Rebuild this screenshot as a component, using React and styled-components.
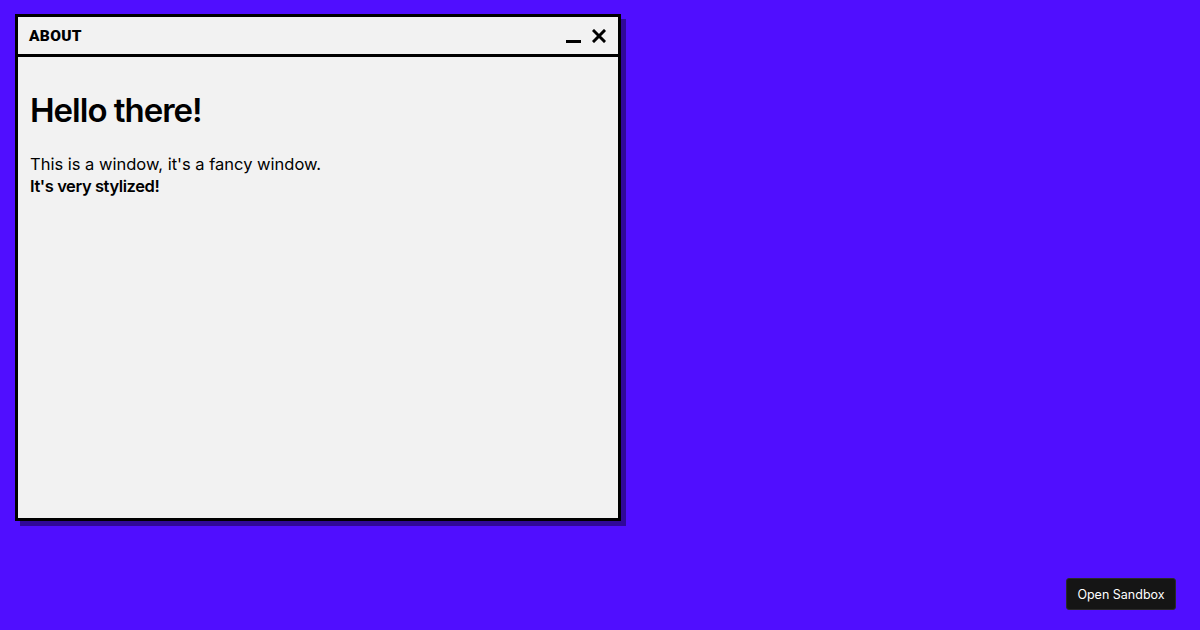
import React from 'react'
import styled, { createGlobalStyle } from 'styled-components'

const GlobalStyle = createGlobalStyle`
    html, body {
        margin: 0;
        padding: 0;
        background: #500eff;
        height: 100%;
    }
    body {
        font-family: 'Inter', 'Liberation Sans', sans-serif;
    }
`

const Page = styled.main`
    min-height: 630px;
    padding: 14px 0 0 15px;
    box-sizing: border-box;
`

const Window = styled.section`
    display: flex;
    flex-direction: column;
    width: 606px;
    height: 507px;
    box-sizing: border-box;
    background: #f2f2f2;
    border: 3px solid #000;
    box-shadow: 5px 5px 0 rgba(0, 0, 0, 0.4);
`

const TitleBar = styled.header`
    display: flex;
    align-items: center;
    justify-content: space-between;
    height: 40px;
    padding: 1px 12px 0 11px;
    box-sizing: border-box;
    border-bottom: 3px solid #000;
    & h2 {
        margin: 0;
        font-family: 'Roboto', 'Inter', sans-serif;
        font-weight: 900;
        font-size: 15.5px;
        letter-spacing: 0.3px;
        color: #000;
    }
`

const Controls = styled.div`
    display: flex;
    align-items: center;
    gap: 11px;
`

const IconButton = styled.button`
    display: flex;
    padding: 0;
    border: none;
    background: none;
    cursor: pointer;
`

const Content = styled.div`
    padding: 33px 12px;
    color: #000;
    & h1 {
        margin: 0 0 23px 0;
        font-family: 'Inter', sans-serif;
        font-weight: 600;
        font-size: 33px;
        letter-spacing: -1px;
        line-height: 40px;
    }
    & p {
        margin: 0;
        font-family: 'Inter', sans-serif;
        font-size: 16.5px;
        line-height: 22px;
        letter-spacing: 0;
        font-weight: 400;
    }
    & strong {
        font-weight: 600;
        letter-spacing: -0.4px;
    }
`

const SandboxButton = styled.a`
    position: fixed;
    right: 24px;
    bottom: 20px;
    display: flex;
    align-items: center;
    justify-content: center;
    width: 110px;
    height: 32px;
    box-sizing: border-box;
    background: #151515;
    border: 1px solid #2a2a2a;
    border-radius: 3px;
    color: #fff;
    font-family: 'Inter', sans-serif;
    font-size: 12.5px;
    text-decoration: none;
`

export default function App() {
    return (
        <>
            <GlobalStyle />
            <Page>
                <Window>
                    <TitleBar>
                        <h2>ABOUT</h2>
                        <Controls>
                            <IconButton aria-label="minimize">
                                <svg width="15" height="16" viewBox="0 0 15 16">
                                    <rect x="0" y="12" width="15" height="3" fill="#000" />
                                </svg>
                            </IconButton>
                            <IconButton aria-label="close">
                                <svg width="14" height="14" viewBox="0 0 14 14">
                                    <path d="M2 2 L12 12 M12 2 L2 12" stroke="#000" strokeWidth="3" strokeLinecap="square" />
                                </svg>
                            </IconButton>
                        </Controls>
                    </TitleBar>
                    <Content>
                        <h1>Hello there!</h1>
                        <p>This is a window, it's a fancy window.</p>
                        <p><strong>It's very stylized!</strong></p>
                    </Content>
                </Window>
                <SandboxButton href="#">Open Sandbox</SandboxButton>
            </Page>
        </>
    )
}
